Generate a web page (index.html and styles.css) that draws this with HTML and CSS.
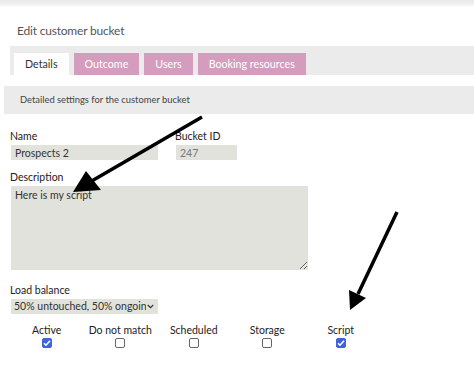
FILE: index.html
```html
<!DOCTYPE html>
<html lang="en">
<head>
    <meta charset="UTF-8">
    <meta name="viewport" content="width=device-width, initial-scale=1.0">
    <title>Edit customer bucket</title>
    <link rel="stylesheet" href="styles.css">
</head>
<body>
    <div class="topband"></div>

    <h1 class="title">Edit customer bucket</h1>

    <div class="tabbar">
        <div class="tab active">Details</div>
        <div class="tab">Outcome</div>
        <div class="tab">Users</div>
        <div class="tab">Booking resources</div>
    </div>

    <div class="infobar">Detailed settings for the customer bucket</div>

    <form class="form">
        <div class="row">
            <div class="field name-field">
                <label for="name">Name</label>
                <input id="name" class="short" type="text" value="Prospects 2">
            </div>
            <div class="field">
                <label for="bucketid">Bucket ID</label>
                <input id="bucketid" class="tiny" type="text" value="247" disabled>
            </div>
        </div>

        <div class="field">
            <label for="desc">Description</label>
            <textarea id="desc">Here is my script</textarea>
        </div>

        <div class="field balance">
            <label for="balance">Load balance</label>
            <div class="select-wrap">
                <select id="balance">
                    <option>50% untouched, 50% ongoing</option>
                    <option>100% untouched</option>
                    <option>100% ongoing</option>
                </select>
                <svg class="chevron" width="7" height="5" viewBox="0 0 7 5">
                    <path d="M0.8 1 L3.5 3.7 L6.2 1" fill="none" stroke="#333" stroke-width="1.2"/>
                </svg>
            </div>
        </div>

        <div class="checks">
            <label class="check">Active<input type="checkbox" checked></label>
            <label class="check">Do not match<input type="checkbox"></label>
            <label class="check">Scheduled<input type="checkbox"></label>
            <label class="check">Storage<input type="checkbox"></label>
            <label class="check">Script<input type="checkbox" checked></label>
        </div>
    </form>

    <!-- annotation arrows drawn over the form -->
    <svg class="arrows" width="474" height="372" viewBox="0 0 474 372">
        <line x1="202" y1="117" x2="90" y2="182" stroke="#000" stroke-width="3.5"/>
        <polygon points="73,192 86,171 101,190" fill="#000"/>
        <line x1="397" y1="212" x2="358" y2="294" stroke="#000" stroke-width="3.5"/>
        <polygon points="350,310 349,290 366,298" fill="#000"/>
    </svg>
</body>
</html>
```

FILE: styles.css
```css
body {
    margin: 0;
    font-family: 'Lato', 'Open Sans', sans-serif;
    font-size: 10.5px;
    color: #333;
    background: #fff;
    position: relative;
    width: 474px;
    height: 372px;
    overflow: hidden;
}

.topband {
    height: 7px;
    background: linear-gradient(#e9e9e9, #f3f3f3 70%, #fff);
}

.title {
    margin: 0;
    padding: 14px 0 0 17px;
    height: 25px;
    font-size: 12px;
    letter-spacing: -0.2px;
    font-weight: normal;
    line-height: 19px;
    color: #555;
}

.tabbar {
    margin-left: 10px;
    height: 22px;
    padding: 7px 0 0 4px;
    background: #ebebeb;
    display: flex;
    gap: 5px;
}

.tab {
    height: 22px;
    line-height: 22px;
    padding: 0 11px;
    background: #d49cbd;
    color: #fff;
    font-size: 10.7px;
}

.tab.active {
    background: #fff;
    color: #333;
}

.infobar {
    margin: 11px 0 0 4px;
    height: 28px;
    line-height: 28px;
    padding-left: 16px;
    background: #ebebeb;
    color: #444;
    font-size: 9.4px;
}

.form {
    padding: 15px 0 0 10px;
}

.row {
    display: flex;
}

.name-field {
    width: 165px;
}

.field label {
    display: block;
    line-height: 14px;
    margin-bottom: 2px;
    color: #222;
}

.field {
    margin-bottom: 10px;
}

.field.balance {
    margin-top: 13px;
}

input[type="text"],
textarea,
select {
    font-family: 'Lato', 'Open Sans', sans-serif;
    font-size: 10.5px;
    color: #333;
    background: #e2e2dc;
    border: none;
    outline: none;
    margin: 0 0 0 1px;
    box-sizing: border-box;
}

input[type="text"] {
    height: 15px;
    padding: 0 4px;
}

input.short {
    width: 147px;
}

input.tiny {
    width: 61px;
    color: #777;
}

textarea {
    display: block;
    width: 297px;
    height: 84px;
    padding: 3px 4px;
    resize: both;
}

.select-wrap {
    position: relative;
    width: 148px;
}

select {
    appearance: none;
    display: block;
    width: 147px;
    height: 15px;
    padding: 0 12px 0 3px;
    line-height: 15px;
}

.chevron {
    position: absolute;
    right: 4px;
    top: 5px;
}

.checks {
    display: grid;
    grid-template-columns: repeat(5, 73.5px);
    margin-top: -1px;
}

.check {
    display: flex;
    flex-direction: column;
    align-items: center;
    line-height: 14px;
    color: #222;
}

.check input {
    appearance: none;
    width: 10px;
    height: 10px;
    margin: 1px 0 0 0;
    border: 1px solid #666;
    border-radius: 2px;
    box-sizing: border-box;
    background: #fff;
}

.check input:checked {
    border-color: #3d63dd;
    background: #3d63dd url("data:image/svg+xml,%3Csvg xmlns='http://www.w3.org/2000/svg' viewBox='0 0 10 10'%3E%3Cpath d='M2 5.2 L4 7.2 L8 2.8' fill='none' stroke='white' stroke-width='1.6'/%3E%3C/svg%3E") center / 10px 10px no-repeat;
}

.arrows {
    position: absolute;
    top: 0;
    left: 0;
    pointer-events: none;
}
```
